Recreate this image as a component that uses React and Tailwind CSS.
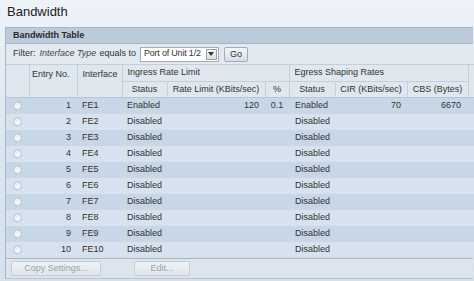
import React from "react";

const rows = [
  { no: 1, port: "FE1", inStatus: "Enabled", rate: "120", pct: "0.1", outStatus: "Enabled", cir: "70", cbs: "6670" },
  ...Array.from({ length: 9 }, (_, i) => ({
    no: i + 2,
    port: `FE${i + 2}`,
    inStatus: "Disabled",
    rate: "",
    pct: "",
    outStatus: "Disabled",
    cir: "",
    cbs: "",
  })),
];

function Radio() {
  return (
    <span className="inline-block w-[9px] h-[9px] rounded-full border border-[#b4bcc4] bg-gradient-to-b from-[#e4e8ec] to-[#fafbfc] align-middle" />
  );
}

export default function App() {
  return (
    <div className="w-[474px] h-[281px] overflow-hidden bg-gradient-to-b from-[#eef3f8] via-[#dce6ef] to-[#d6e1ec] font-['Liberation_Sans',Arial,sans-serif] text-[#333]">
      {/* Title */}
      <div className="h-[27px] pl-[7px] pt-[4px] text-[13px] leading-[16px] text-[#222]">
        Bandwidth
      </div>

      {/* Panel */}
      <div className="ml-[5px] w-[468px] border-l border-[#a8b8c8]">
        <div className="h-[17px] pl-[7px] bg-[#bccbdb] border-y border-[#a6b7c8] text-[9px] font-bold leading-[15px] text-[#2a2a2a]">
          Bandwidth Table
        </div>

        {/* Filter */}
        <div className="h-[20px] flex items-center pl-[7px] bg-[#e2e9f0] text-[9px] whitespace-nowrap">
          <span>Filter:</span>
          <span className="ml-[4px] italic text-[#444]">Interface Type</span>
          <span className="ml-[3px]">equals to</span>
          <div className="ml-[4px] h-[15px] w-[79px] shrink-0 flex items-center justify-between border border-[#a5adb5] bg-white pl-[3px] pr-[1px] tracking-[-0.2px]">
            <span>Port of Unit 1/2</span>
            <span className="w-[11px] h-[11px] flex items-center justify-center border border-[#9aa3ac] bg-gradient-to-b from-[#fafafa] to-[#dcdcdc]">
              <svg width="6" height="4" viewBox="0 0 6 4">
                <path d="M0 0H6L3 4Z" fill="#333" />
              </svg>
            </span>
          </div>
          <button className="ml-[5px] h-[15px] w-[24px] shrink-0 rounded-[2px] border border-[#9eabb8] bg-gradient-to-b from-[#f4f7fa] to-[#d5dde5] text-[9px] leading-[13px] text-[#333]">
            Go
          </button>
        </div>

        {/* Table */}
        <table className="w-[468px] table-fixed border-collapse text-[9px]">
          <colgroup>
            <col className="w-[23px]" />
            <col className="w-[48px]" />
            <col className="w-[45px]" />
            <col className="w-[45px]" />
            <col className="w-[98px]" />
            <col className="w-[24px]" />
            <col className="w-[46px]" />
            <col className="w-[72px]" />
            <col className="w-[61px]" />
            <col className="w-[6px]" />
          </colgroup>
          <thead className="bg-[#dfe7ef]">
            <tr className="h-[17px] border-t border-[#c3cfdb]">
              <th rowSpan={2} className="border-r border-[#c3cfdb]" />
              <th rowSpan={2} className="border-r border-[#c3cfdb] align-top pt-[3px] font-normal text-right pr-[7px]">
                Entry No.
              </th>
              <th rowSpan={2} className="border-r border-[#c3cfdb] align-top pt-[3px] font-normal text-left pl-[5px]">
                Interface
              </th>
              <th colSpan={3} className="border-r border-b border-[#c3cfdb] font-normal text-left pl-[5px]">
                Ingress Rate Limit
              </th>
              <th colSpan={3} className="border-r border-b border-[#c3cfdb] font-normal text-left pl-[5px]">
                Egress Shaping Rates
              </th>
              <th rowSpan={2} />
            </tr>
            <tr className="h-[16px] border-b border-[#b9c7d5]">
              <th className="border-r border-[#c3cfdb] font-normal">Status</th>
              <th className="border-r border-[#c3cfdb] font-normal">Rate Limit (KBits/sec)</th>
              <th className="border-r border-[#c3cfdb] font-normal">%</th>
              <th className="border-r border-[#c3cfdb] font-normal">Status</th>
              <th className="border-r border-[#c3cfdb] font-normal">CIR (KBits/sec)</th>
              <th className="border-r border-[#c3cfdb] font-normal">CBS (Bytes)</th>
            </tr>
          </thead>
          <tbody>
            {rows.map((r, i) => (
              <tr key={r.no} className={`h-[16px] ${i % 2 === 0 ? "bg-[#c8d7e7]" : "bg-[#d7e2ee]"}`}>
                <td className="text-center">
                  <Radio />
                </td>
                <td className="text-right pr-[6px]">{r.no}</td>
                <td className="pl-[5px]">{r.port}</td>
                <td className="pl-[5px]">{r.inStatus}</td>
                <td className="text-right pr-[6px]">{r.rate}</td>
                <td className="text-center">{r.pct}</td>
                <td className="pl-[6px]">{r.outStatus}</td>
                <td className="text-right pr-[6px]">{r.cir}</td>
                <td className="text-right pr-[7px]">{r.cbs}</td>
                <td />
              </tr>
            ))}
          </tbody>
        </table>

        {/* Buttons */}
        <div className="h-[21px] flex items-center gap-[33px] pl-[5px] bg-[#dde4eb] border-t border-[#a9b6c3] border-b border-b-[#b9c6d3]">
          <button className="h-[15px] w-[90px] rounded-[2px] border border-[#c4ccd4] bg-gradient-to-b from-[#f0f3f6] to-[#e0e6ec] text-[9px] text-[#9aa2aa]">
            Copy Settings...
          </button>
          <button className="h-[15px] w-[56px] rounded-[2px] border border-[#c4ccd4] bg-gradient-to-b from-[#f0f3f6] to-[#e0e6ec] text-[9px] text-[#9aa2aa]">
            Edit...
          </button>
        </div>
      </div>
    </div>
  );
}
